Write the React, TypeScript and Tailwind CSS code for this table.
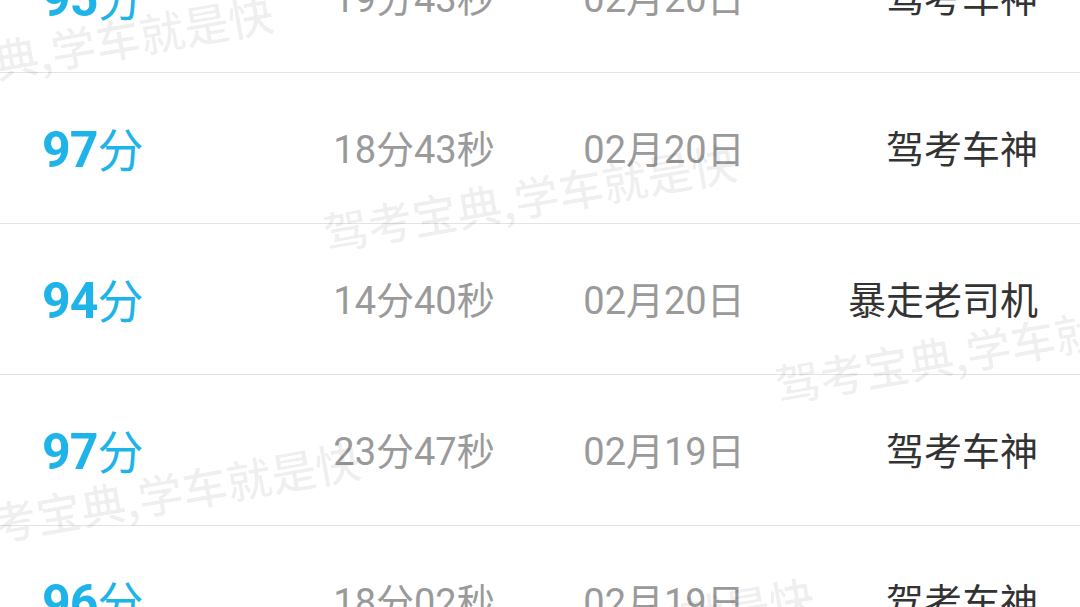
import React from 'react'

type Rec = { score: number; time: string; date: string; name: string }

const records: Rec[] = [
  { score: 95, time: '19分43秒', date: '02月20日', name: '驾考车神' },
  { score: 97, time: '18分43秒', date: '02月20日', name: '驾考车神' },
  { score: 94, time: '14分40秒', date: '02月20日', name: '暴走老司机' },
  { score: 97, time: '23分47秒', date: '02月19日', name: '驾考车神' },
  { score: 96, time: '18分02秒', date: '02月19日', name: '驾考车神' },
]

// watermark anchors: center of the first glyph
const marks = [
  { x: -118, y: 79 },
  { x: 345, y: 228 },
  { x: 797, y: 380 },
  { x: -31, y: 526 },
  { x: 423, y: 662 },
]

function Row({ r }: { r: Rec }) {
  return (
    <div className="flex h-[151px] items-center border-b border-[#e3e3e3] pt-[4px] pl-[42px] pr-[42px]">
      <div className="w-[250px] shrink-0 text-[#1eb3e9]">
        <span className="text-[50px] font-bold tracking-[-1px]">{r.score}</span>
        <span className="text-[46px]">分</span>
      </div>
      <div className="w-[244px] shrink-0 text-center text-[38px] text-[#9a9a9a]">{r.time}</div>
      <div className="w-[256px] shrink-0 text-center text-[38px] text-[#9a9a9a]">{r.date}</div>
      <div className="flex-1 text-right text-[38px] text-[#333333]">{r.name}</div>
    </div>
  )
}

export default function App() {
  return (
    <div
      className="relative h-[607px] w-[1080px] overflow-hidden bg-white leading-none"
      style={{ fontFamily: 'Roboto, "Noto Sans CJK SC", sans-serif' }}
    >
      <div className="mt-[-78px]">
        {records.map((r, i) => (
          <Row key={i} r={r} />
        ))}
      </div>
      {marks.map((m, i) => (
        <span
          key={i}
          className="pointer-events-none absolute whitespace-nowrap text-[45px] font-medium leading-none text-black/[0.065] rotate-[-10deg] origin-[22px_50%]"
          style={{ left: m.x - 22, top: m.y - 22, fontFamily: '"Noto Sans CJK SC", sans-serif' }}
        >
          驾考宝典,学车就是快
        </span>
      ))}
    </div>
  )
}
